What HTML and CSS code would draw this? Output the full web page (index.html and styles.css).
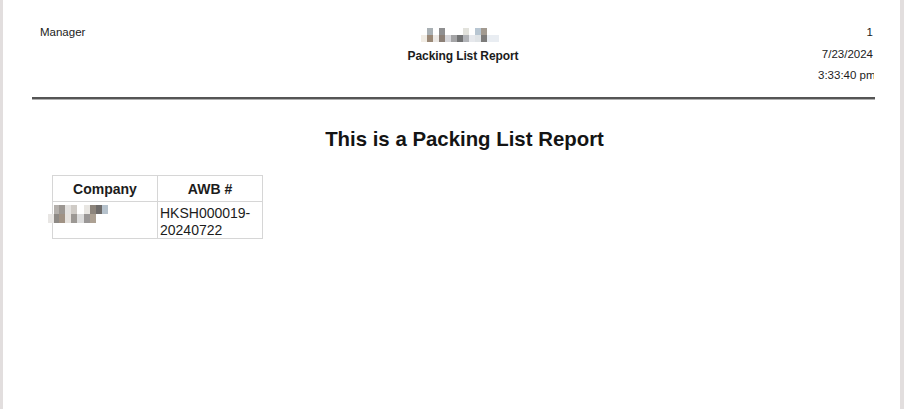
FILE: index.html
```html
<!DOCTYPE html>
<html>
<head>
<meta charset="utf-8">
<link rel="stylesheet" href="styles.css">
</head>
<body>
<div class="page">
  <header class="rpt-head">
    <div class="col-left">Manager</div>
    <div class="col-center">
      <svg class="blur-top" width="84" height="14" viewBox="0 0 84 14">
        <rect x="6" y="0" width="6" height="7" fill="#a9b0b4"/>
        <rect x="18" y="0" width="6" height="7" fill="#8f8f90"/>
        <rect x="42" y="0" width="6" height="7" fill="#e2e2dc"/>
        <rect x="54" y="0" width="6" height="7" fill="#b8c6d2"/>
        <rect x="60" y="0" width="6" height="7" fill="#a29a90"/>
        <rect x="0" y="7" width="6" height="7" fill="#f1ece4"/>
        <rect x="6" y="7" width="6" height="7" fill="#9a8876"/>
        <rect x="12" y="7" width="6" height="7" fill="#ece8e4"/>
        <rect x="18" y="7" width="6" height="7" fill="#8b7f76"/>
        <rect x="24" y="7" width="6" height="7" fill="#d6d6da"/>
        <rect x="30" y="7" width="6" height="7" fill="#a4a4a6"/>
        <rect x="36" y="7" width="6" height="7" fill="#727374"/>
        <rect x="42" y="7" width="6" height="7" fill="#b2b4b8"/>
        <rect x="48" y="7" width="6" height="7" fill="#e6e8ec"/>
        <rect x="54" y="7" width="6" height="7" fill="#dfe3e6"/>
        <rect x="60" y="7" width="6" height="7" fill="#7c7b7a"/>
        <rect x="66" y="7" width="12" height="7" fill="#e9edf2"/>
      </svg>
      <div class="rpt-name">Packing List Report</div>
    </div>
    <div class="col-right">
      <div>1</div>
      <div>7/23/2024</div>
      <div class="time">3:33:40 pm</div>
    </div>
  </header>
  <div class="rule"></div>
  <h1 class="title">This is a Packing List Report</h1>
  <table class="grid">
    <thead>
      <tr><th class="c1">Company</th><th class="c2">AWB #</th></tr>
    </thead>
    <tbody>
      <tr>
        <td class="c1">
          <svg class="blur-co" width="62" height="18" viewBox="0 0 62 18">
            <rect x="6" y="0" width="5" height="9" fill="#b4b0ac"/>
            <rect x="11" y="0" width="6" height="9" fill="#9c9792"/>
            <rect x="17" y="0" width="6" height="9" fill="#e4e2e0"/>
            <rect x="23" y="0" width="6" height="9" fill="#cfcbc6"/>
            <rect x="36" y="0" width="6" height="9" fill="#e8e6e2"/>
            <rect x="42" y="0" width="6" height="9" fill="#8d857c"/>
            <rect x="48" y="0" width="6" height="9" fill="#6f6c6a"/>
            <rect x="54" y="0" width="6" height="9" fill="#b6c2cc"/>
            <rect x="0" y="9" width="6" height="9" fill="#e8e6e4"/>
            <rect x="6" y="9" width="5" height="9" fill="#8e8a86"/>
            <rect x="11" y="9" width="6" height="9" fill="#a09284"/>
            <rect x="17" y="9" width="6" height="9" fill="#e6e2de"/>
            <rect x="23" y="9" width="6" height="9" fill="#9c9894"/>
            <rect x="29" y="9" width="7" height="9" fill="#dcdcdc"/>
            <rect x="36" y="9" width="6" height="9" fill="#9a9796"/>
            <rect x="42" y="9" width="6" height="9" fill="#ada193"/>
          </svg>
        </td>
        <td class="c2">HKSH000019-<br>20240722</td>
      </tr>
    </tbody>
  </table>
</div>
</body>
</html>
```

FILE: styles.css
```css
html, body {
  margin: 0;
  padding: 0;
  background: #ffffff;
}

.page {
  box-sizing: border-box;
  width: 904px;
  height: 409px;
  border-left: 3px solid #e2dede;
  border-right: 4px solid #e2dede;
  background: #ffffff;
  font-family: "Liberation Sans", Arial, sans-serif;
  color: #1c1c1c;
  overflow: hidden;
}

.rpt-head {
  display: flex;
  padding: 22px 0 0 37px;
  font-size: 11.5px;
  line-height: 21.5px;
  height: 65px;
}

.col-left {
  width: 323px;
}

.col-center {
  width: 200px;
  display: flex;
  flex-direction: column;
  align-items: center;
}

.blur-top {
  display: block;
  margin: 6px 0 4px 0;
}

.rpt-name {
  font-weight: bold;
  font-size: 12px;
  letter-spacing: -0.1px;
}

.col-right {
  width: 310px;
  display: flex;
  flex-direction: column;
  align-items: flex-end;
}

.time {
  width: 56px;
  margin-right: -1px;
  white-space: nowrap;
  overflow: hidden;
  text-align: left;
}

.rule {
  margin: 10px 25px 0 29px;
  height: 2px;
  background: #555555;
  box-shadow: 0 1px 0 #b0b0b0;
}

.title {
  margin: 28px 0 0 0;
  padding-left: 26px;
  text-align: center;
  font-size: 20.4px;
  line-height: 24px;
  font-weight: bold;
  color: #141414;
}

.grid {
  margin: 24px 0 0 49px;
  border-collapse: collapse;
  font-size: 14px;
}

.grid th, .grid td {
  border: 1px solid #d6d6d6;
  padding: 0 2px;
  vertical-align: top;
}

.grid th {
  height: 25px;
  font-weight: bold;
  text-align: center;
  vertical-align: middle;
  line-height: 16px;
}

.grid td {
  height: 37px;
  line-height: 16.5px;
  padding-top: 3px;
  box-sizing: border-box;
}

.grid .c1 {
  width: 100px;
}

.grid .c2 {
  width: 100px;
}

.blur-co {
  display: block;
  margin: 0 0 0 -7px;
}
```
